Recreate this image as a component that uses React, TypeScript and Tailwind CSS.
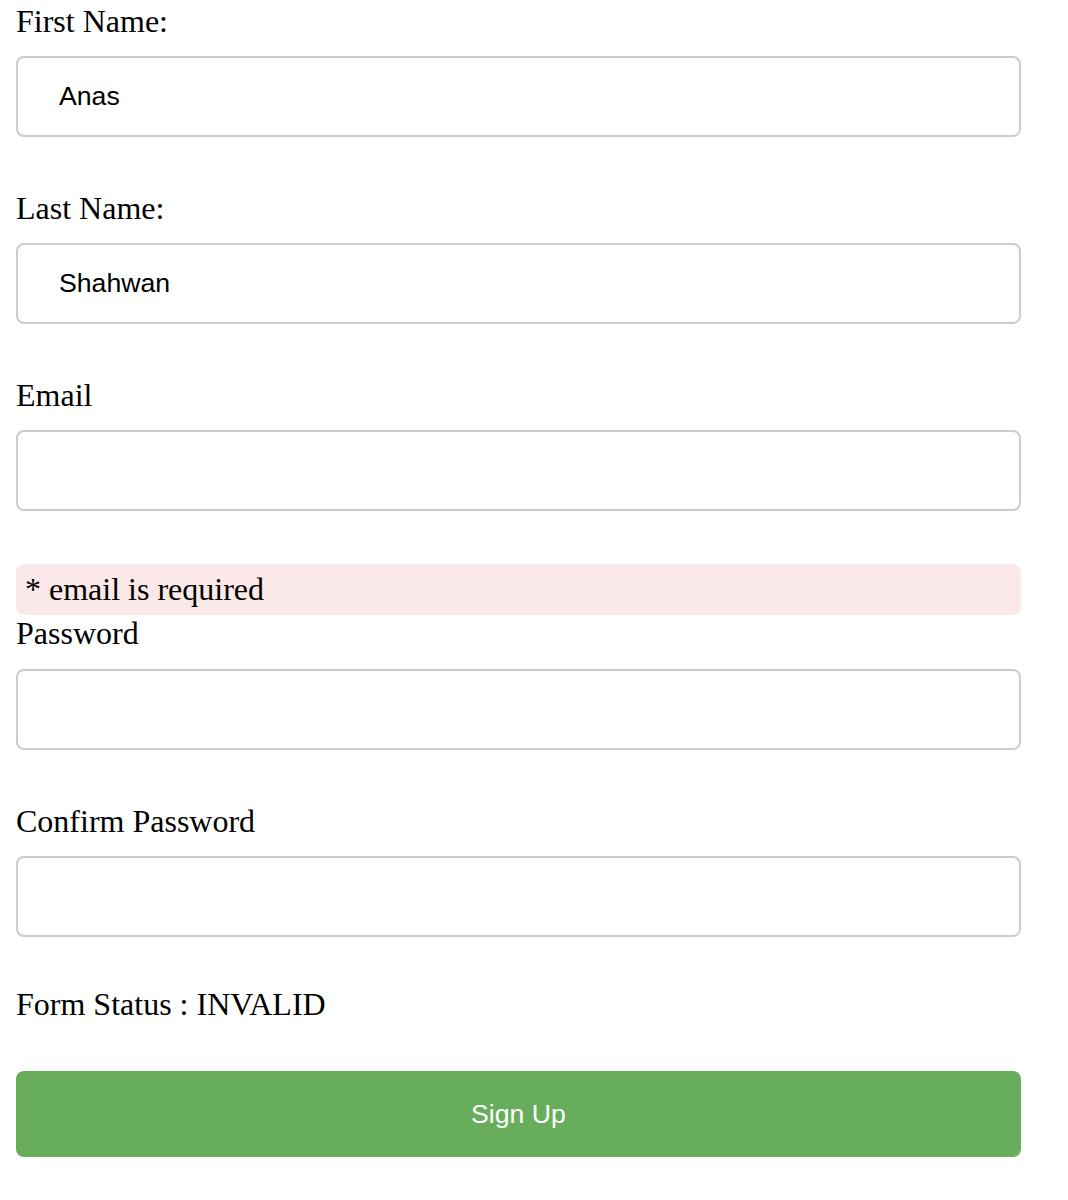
import { useState } from "react"

const labelCls = "block text-[32px] leading-[37px] text-black [font-family:'Liberation_Serif','Times_New_Roman',serif]"
const inputCls =
  "block w-full h-[81px] rounded-[8px] border-2 border-[#cccccc] bg-white px-[41px] text-[26.67px] text-black outline-none [font-family:'Liberation_Sans',Arial,sans-serif]"

export default function App() {
  const [firstName, setFirstName] = useState("Anas")
  const [lastName, setLastName] = useState("Shahwan")
  const [email, setEmail] = useState("")
  const [password, setPassword] = useState("")
  const [confirm, setConfirm] = useState("")

  return (
    <div className="min-h-[1200px] bg-white">
      <form className="w-[1005px] ml-[16px] pt-[3px]" onSubmit={(e) => e.preventDefault()}>
        {/* First name */}
        <label className={labelCls}>First Name:</label>
        <input
          className={`${inputCls} mt-[16px]`}
          value={firstName}
          onChange={(e) => setFirstName(e.target.value)}
        />

        {/* Last name */}
        <label className={`${labelCls} mt-[53px]`}>Last Name:</label>
        <input
          className={`${inputCls} mt-[16px]`}
          value={lastName}
          onChange={(e) => setLastName(e.target.value)}
        />

        {/* Email */}
        <label className={`${labelCls} mt-[53px]`}>Email</label>
        <input
          className={`${inputCls} mt-[16px]`}
          value={email}
          onChange={(e) => setEmail(e.target.value)}
        />
        <div className="mt-[53px] rounded-[8px] bg-[#fbe9e9] pl-[9px] pt-[7px] pb-[7px]">
          <span className={labelCls}>* email is required</span>
        </div>

        {/* Password */}
        <label className={labelCls}>Password</label>
        <input
          type="password"
          className={`${inputCls} mt-[17px]`}
          value={password}
          onChange={(e) => setPassword(e.target.value)}
        />

        {/* Confirm password */}
        <label className={`${labelCls} mt-[53px]`}>Confirm Password</label>
        <input
          type="password"
          className={`${inputCls} mt-[16px]`}
          value={confirm}
          onChange={(e) => setConfirm(e.target.value)}
        />

        <p className={`${labelCls} mt-[49px]`}>Form Status : INVALID</p>

        <button
          type="submit"
          className="mt-[48px] block w-full h-[86px] rounded-[8px] bg-[#67ad5b] text-[26.67px] text-white [font-family:'Liberation_Sans',Arial,sans-serif]"
        >
          Sign Up
        </button>
      </form>
    </div>
  )
}
